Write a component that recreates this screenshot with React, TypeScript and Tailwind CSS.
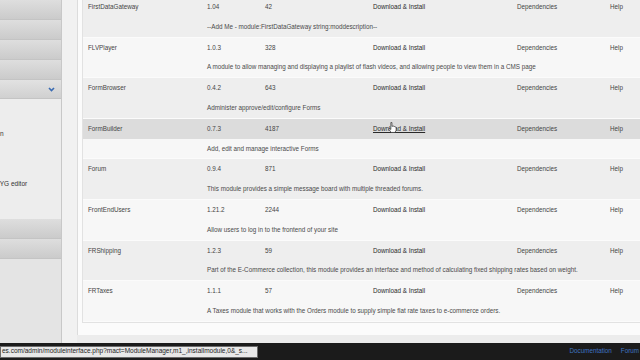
import React from "react";

interface Mod {
  name: string;
  version: string;
  downloads: string;
  description: string;
}

const modules: Mod[] = [
  { name: "FirstDataGateway", version: "1.04", downloads: "42", description: "--Add Me - module:FirstDataGateway string:moddescription--" },
  { name: "FLVPlayer", version: "1.0.3", downloads: "328", description: "A module to allow managing and displaying a playlist of flash videos, and allowing people to view them in a CMS page" },
  { name: "FormBrowser", version: "0.4.2", downloads: "643", description: "Administer approve/edit/configure Forms" },
  { name: "FormBuilder", version: "0.7.3", downloads: "4187", description: "Add, edit and manage interactive Forms" },
  { name: "Forum", version: "0.9.4", downloads: "871", description: "This module provides a simple message board with multiple threaded forums." },
  { name: "FrontEndUsers", version: "1.21.2", downloads: "2244", description: "Allow users to log in to the frontend of your site" },
  { name: "FRShipping", version: "1.2.3", downloads: "59", description: "Part of the E-Commerce collection, this module provides an interface and method of calculating fixed shipping rates based on weight." },
  { name: "FRTaxes", version: "1.1.1", downloads: "57", description: "A Taxes module that works with the Orders module to supply simple flat rate taxes to e-commerce orders." },
];

const HOVER = 3;

function SideItem({ children }: { children?: React.ReactNode }) {
  return (
    <div className="flex h-[20px] items-center border-b border-[#c4c4c4] bg-gradient-to-b from-[#dedede] to-[#cbcbcb]">
      {children}
    </div>
  );
}

function Cursor() {
  return (
    <svg className="absolute left-[20px] top-[-4px]" width="9" height="11" viewBox="0 0 8 10">
      <path
        d="M2.5 0.5 L3.5 0.5 L3.5 4 L4.5 3.6 L5.5 4 L6.5 4.4 L7.3 5 L7.3 7.5 L6.3 9.5 L2.8 9.5 L0.6 6.5 L1 5.8 L2.5 6.8 Z"
        fill="#fff"
        stroke="#222"
        strokeWidth="0.6"
      />
    </svg>
  );
}

export default function App() {
  return (
    <div
      className="flex h-[360px] w-[640px] flex-col overflow-hidden bg-[#ececec] text-[6.3px] leading-none text-[#444]"
      style={{ fontFamily: '"Liberation Sans", Arial, sans-serif' }}
    >
      <div className="flex min-h-0 flex-1">
        {/* left navigation */}
        <div className="flex w-[62px] flex-col overflow-hidden border-r border-[#c8c8c8] bg-[#e6e6e6] shadow-[1px_0_2px_rgba(0,0,0,0.12)]">
          <SideItem />
          <SideItem />
          <SideItem />
          <SideItem />
          <div className="flex h-[19px] items-center justify-end border-b border-[#c4c4c4] bg-gradient-to-b from-[#e2e2e2] to-[#d0d0d0] pr-[6px]">
            <svg width="7" height="5" viewBox="0 0 7 5">
              <polyline points="1,1 3.5,3.6 6,1" fill="none" stroke="#3b6cb3" strokeWidth="1.6" />
            </svg>
          </div>
          <div className="h-[120px] bg-[#ededed] text-[6.5px] text-[#333]">
            <div className="mt-[32px] whitespace-nowrap ml-[-14.8px]">Admin</div>
            <div className="mt-[43px] whitespace-nowrap ml-[-23px]">WYSIWYG editor</div>
          </div>
          <SideItem />
          <SideItem />
          <div className="flex-1 bg-[#e4e4e4]" />
        </div>

        {/* gutter */}
        <div className="w-[15px] bg-[#f1f1f1]" />

        {/* content */}
        <div className="flex min-w-0 flex-1 flex-col">
          <div className="h-[335px] overflow-hidden border-l border-[#dcdcdc] bg-[#fbfbfb] pl-[4px]">
            <div className="-mt-[3px] w-[600px] border-b border-l border-[#e2e2e2]">
              {modules.map((m, i) => {
                const bg = i % 2 === 0 ? "bg-[#eeeeee]" : "bg-[#f7f7f7]";
                const hovered = i === HOVER;
                return (
                  <div key={m.name} className={bg}>
                    <div
                      className={
                        "grid h-[20.3px] grid-cols-[119px_58px_108px_144px_93px_1fr] items-center " +
                        (hovered ? "bg-[#dcdcdc]" : "")
                      }
                    >
                      <div className="pl-[5px]">{m.name}</div>
                      <div className="pl-[5px]">{m.version}</div>
                      <div className="pl-[5px]">{m.downloads}</div>
                      <div className="relative pl-[5px] text-[#2a2a2a]">
                        <span className={hovered ? "underline" : ""}>Download &amp; Install</span>
                        {hovered && <Cursor />}
                      </div>
                      <div className="pl-[5px]">Dependencies</div>
                      <div className="pl-[5px]">Help</div>
                    </div>
                    <div className="grid h-[20.3px] grid-cols-[119px_1fr] items-center border-b border-[#fbfbfb]">
                      <div />
                      <div className="whitespace-nowrap pl-[5px] text-[#4a4a4a]">{m.description}</div>
                    </div>
                  </div>
                );
              })}
            </div>
          </div>
        </div>
      </div>

      {/* status bar */}
      <div className="flex h-[17px] items-center bg-[#1b1b1b]">
        <div className="flex h-[12px] w-[258px] items-center overflow-hidden whitespace-nowrap border border-[#6a6a6a] bg-[#e8e8e8] pl-[1px] text-[6.5px] text-[#1e1e1e]">
          es.com/admin/moduleinterface.php?mact=ModuleManager,m1_,installmodule,0&amp;_s...
        </div>
        <div className="ml-auto mr-[1px] flex gap-[9px] whitespace-nowrap text-[6.3px] text-[#3f74c2]">
          <span>Documentation</span>
          <span>Forum</span>
        </div>
      </div>
    </div>
  );
}
